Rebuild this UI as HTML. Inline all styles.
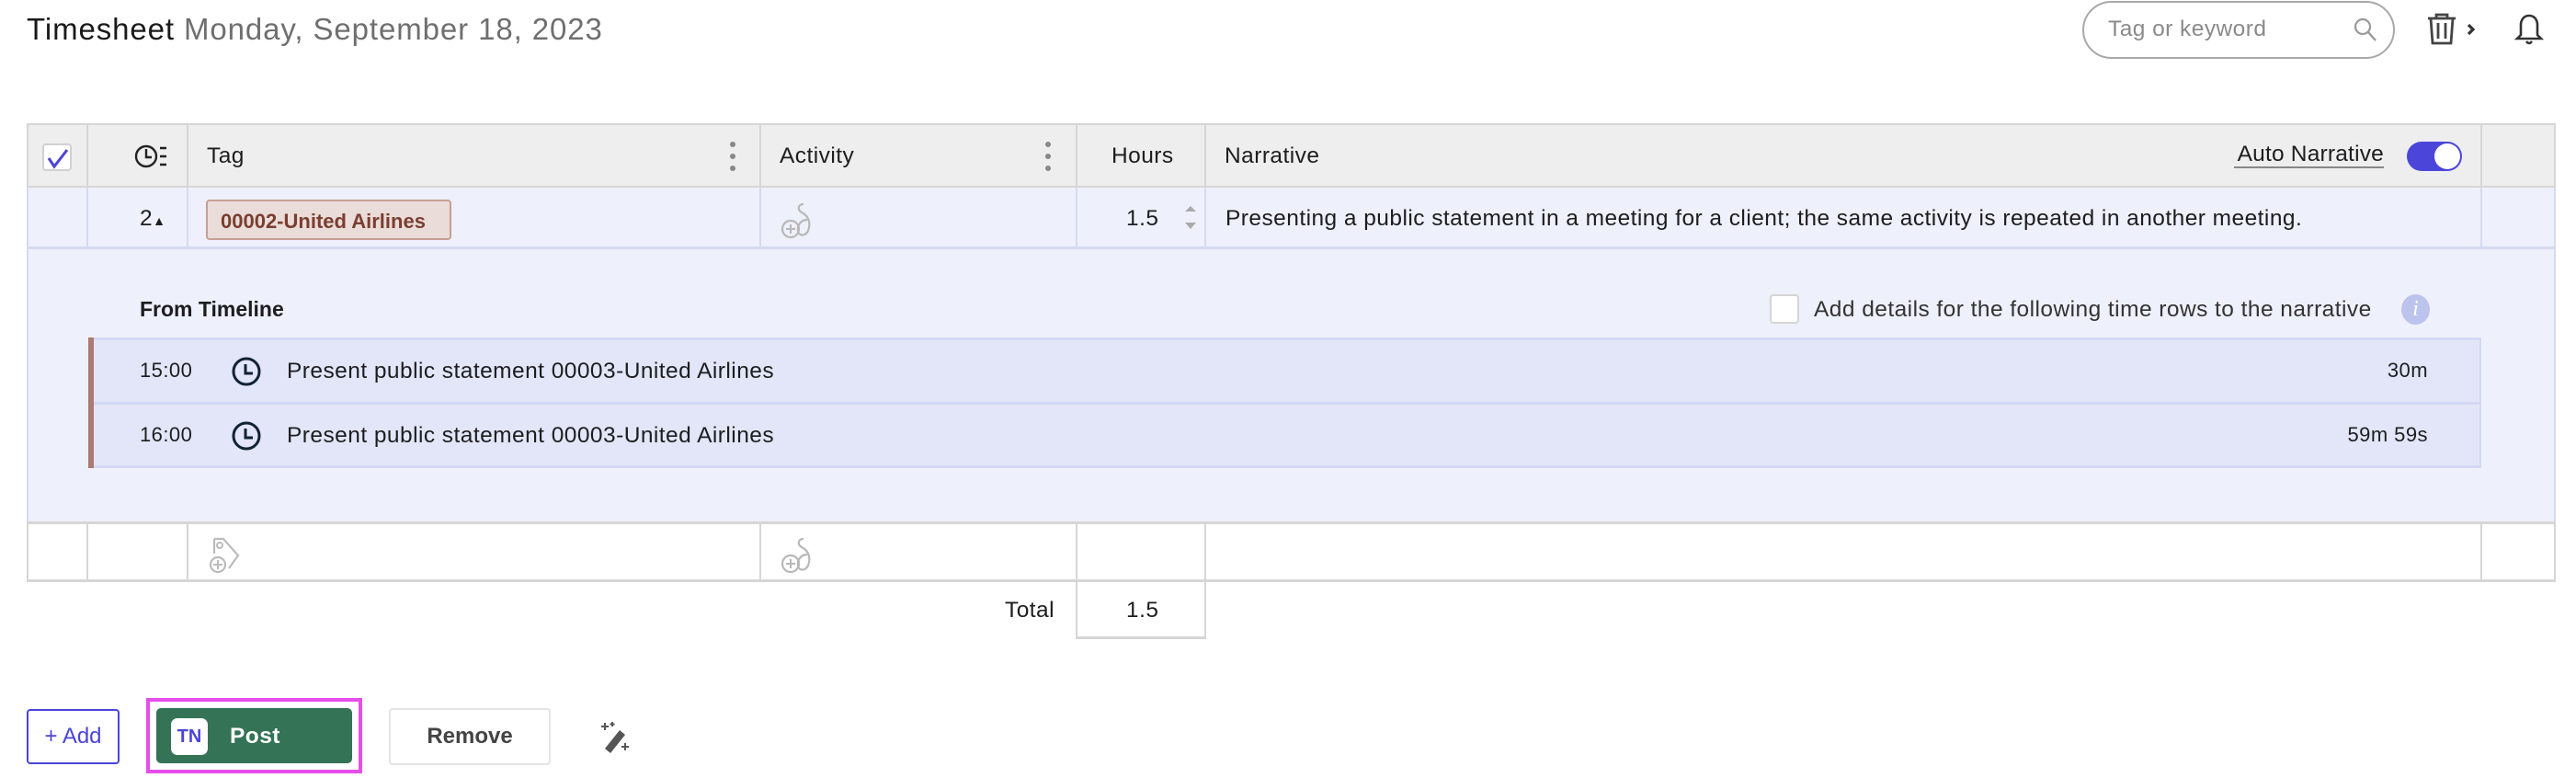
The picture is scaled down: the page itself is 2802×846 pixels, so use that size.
<!DOCTYPE html>
<html><head><meta charset="utf-8"><style>
*{box-sizing:border-box;margin:0;padding:0}
body{width:2802px;height:846px;background:#fff;font-family:"Liberation Sans",sans-serif;color:#1d1d1f;position:relative;overflow:hidden}
.a{position:absolute}
.t{font-size:24.5px;letter-spacing:0.45px;white-space:nowrap}
.vl{position:absolute;width:2px}
</style></head><body>
<div class="a" style="left:29px;top:13px;font-size:33px;white-space:nowrap;letter-spacing:0.9px"><span style="color:#1a1a1a">Timesheet</span> <span style="color:#6f6f6f">Monday, September 18, 2023</span></div>

<div class="a" style="left:2265px;top:1px;width:340px;height:63px;border:2px solid #a8a8a8;border-radius:32px"></div>
<div class="a t" style="left:2293px;top:18px;color:#8a8a8a">Tag or keyword</div>
<svg class="a" style="left:2558px;top:17px" width="32" height="32" viewBox="0 0 32 32"><circle cx="12" cy="12" r="8" fill="none" stroke="#999" stroke-width="2.2"/><path d="M18 18l8 9" stroke="#999" stroke-width="2.4"/></svg>
<svg class="a" style="left:2638px;top:14px" width="60" height="36" viewBox="0 0 60 36"><path d="M3 6h30M12 6V2h12v4M6 6l2 27h20l2-27M14 11v17M22 11v17" fill="none" stroke="#444" stroke-width="2.8"/><path d="M47 13l5 5-5 5" fill="none" stroke="#333" stroke-width="3.2"/></svg>
<svg class="a" style="left:2734px;top:15px" width="34" height="34" viewBox="0 0 34 34"><path d="M17 2c-6 0-9 5-9 10v11l-4 4h26l-4-4V12c0-5-3-10-9-10zM14 30q3 4 6 0" fill="none" stroke="#333" stroke-width="2.6"/></svg>

<!-- header -->
<div class="a" style="left:29px;top:134px;width:2751px;height:71px;background:#eeeeee;border:2px solid #d6d6d6;border-bottom:3px solid #d6d6d6"></div>
<div class="vl" style="left:94px;top:134px;height:70px;background:#d6d6d6"></div>
<div class="vl" style="left:203px;top:134px;height:70px;background:#d6d6d6"></div>
<div class="vl" style="left:826px;top:134px;height:70px;background:#d6d6d6"></div>
<div class="vl" style="left:1170px;top:134px;height:70px;background:#d6d6d6"></div>
<div class="vl" style="left:1310px;top:134px;height:70px;background:#d6d6d6"></div>
<div class="vl" style="left:2698px;top:134px;height:70px;background:#d6d6d6"></div>
<div class="a" style="left:46px;top:156px;width:32px;height:30px;border:2px solid #d0d0d0;border-radius:4px;background:#fff"></div>
<svg class="a" style="left:49px;top:159px" width="28" height="26" viewBox="0 0 28 26"><path d="M4 13l6 9L24 4" fill="none" stroke="#4a44d8" stroke-width="3"/></svg>
<svg class="a" style="left:145px;top:151px" width="40" height="40" viewBox="0 0 40 40"><circle cx="14" cy="19" r="11" fill="none" stroke="#222" stroke-width="2.4"/><path d="M14 11v9h6M29 10h7M29 19h7M29 28h7" fill="none" stroke="#222" stroke-width="2.4"/></svg>
<div class="a t" style="left:225px;top:156px">Tag</div>
<svg class="a" style="left:790px;top:152px" width="14" height="38"><circle cx="7" cy="5" r="3" fill="#888"/><circle cx="7" cy="18" r="3" fill="#888"/><circle cx="7" cy="31" r="3" fill="#888"/></svg>
<div class="a t" style="left:848px;top:156px">Activity</div>
<svg class="a" style="left:1133px;top:152px" width="14" height="38"><circle cx="7" cy="5" r="3" fill="#888"/><circle cx="7" cy="18" r="3" fill="#888"/><circle cx="7" cy="31" r="3" fill="#888"/></svg>
<div class="a t" style="left:1209px;top:156px">Hours</div>
<div class="a t" style="left:1332px;top:156px">Narrative</div>
<div class="a t" style="left:2430px;top:155px;width:163px;border-bottom:2px solid #888;line-height:26px;text-align:right;letter-spacing:0.2px">Auto Narrative</div>
<div class="a" style="left:2618px;top:154px;width:60px;height:32px;background:#4b46d9;border-radius:16px"></div>
<div class="a" style="left:2648px;top:156px;width:28px;height:28px;background:#fff;border-radius:50%"></div>

<!-- row1 + panel -->
<div class="a" style="left:29px;top:204px;width:2751px;height:364px;background:#eef0fb;border-left:2px solid #d5daf0;border-right:2px solid #d5daf0"></div>
<div class="a" style="left:29px;top:268px;width:2751px;height:3px;background:#d5daf0"></div>
<div class="vl" style="left:94px;top:204px;height:65px;background:#d5daf0"></div>
<div class="vl" style="left:203px;top:204px;height:65px;background:#d5daf0"></div>
<div class="vl" style="left:826px;top:204px;height:65px;background:#d5daf0"></div>
<div class="vl" style="left:1170px;top:204px;height:65px;background:#d5daf0"></div>
<div class="vl" style="left:1310px;top:204px;height:65px;background:#d5daf0"></div>
<div class="vl" style="left:2698px;top:204px;height:65px;background:#d5daf0"></div>
<div class="a t" style="left:152px;top:224px">2<span style="font-size:14px">▲</span></div>
<div class="a" style="left:224px;top:217px;width:267px;height:44px;background:#eadcd8;border:2px solid #c79f95;border-radius:4px;color:#7a3e30;font-size:22px;font-weight:bold;padding:9px 0 0 14px;white-space:nowrap">00002-United Airlines</div>
<svg class="a" style="left:848px;top:218px" width="42" height="44" viewBox="0 0 42 44"><circle cx="12" cy="31" r="9" fill="none" stroke="#b8b8b8" stroke-width="2.2"/><path d="M12 26v10M7 31h10" stroke="#b8b8b8" stroke-width="2"/><path d="M26 4c-6 0-7 6-2 9c8 4 10 12 7 20c-3 6-10 6-11 0c-1-7 4-12 10-12" fill="none" stroke="#b8b8b8" stroke-width="2.2"/></svg>
<div class="a t" style="left:1225px;top:224px">1.5</div>
<svg class="a" style="left:1288px;top:222px" width="14" height="30"><path d="M1 8l6-6 6 6zM1 20l6 7 6-7z" fill="#aaa"/></svg>
<div class="a t" style="left:1333px;top:224px">Presenting a public statement in a meeting for a client; the same activity is repeated in another meeting.</div>

<div class="a t" style="left:152px;top:323px;font-weight:bold;font-size:23px;letter-spacing:0">From Timeline</div>
<div class="a" style="left:1925px;top:320px;width:32px;height:32px;background:#fff;border:2px solid #d5d5d5;border-radius:4px"></div>
<div class="a t" style="left:1973px;top:323px;color:#333">Add details for the following time rows to the narrative</div>
<div class="a" style="left:2612px;top:320px;width:31px;height:33px;border-radius:50%;background:#bcc3ec;color:#fff;font-style:italic;font-family:'Liberation Serif',serif;font-size:24px;text-align:center;line-height:33px">i</div>

<div class="a" style="left:96px;top:367px;width:2603px;height:142px;background:#e2e6f8;border-top:3px solid #d3d9f3;border-bottom:3px solid #d3d9f3;border-right:2px solid #d3d9f3"></div>
<div class="a" style="left:96px;top:367px;width:6px;height:142px;background:#ab7a70"></div>
<div class="a" style="left:102px;top:437px;width:2596px;height:3px;background:#d3d9f3"></div>
<div class="a t" style="left:152px;top:390px;font-size:22px">15:00</div>
<div class="a t" style="left:152px;top:460px;font-size:22px">16:00</div>
<svg class="a" style="left:251px;top:387px" width="34" height="34" viewBox="0 0 34 34"><circle cx="17" cy="17" r="14" fill="none" stroke="#112233" stroke-width="3"/><path d="M16 9v10h8" fill="none" stroke="#112233" stroke-width="3"/></svg>
<svg class="a" style="left:251px;top:457px" width="34" height="34" viewBox="0 0 34 34"><circle cx="17" cy="17" r="14" fill="none" stroke="#112233" stroke-width="3"/><path d="M16 9v10h8" fill="none" stroke="#112233" stroke-width="3"/></svg>
<div class="a t" style="left:312px;top:390px">Present public statement 00003-United Airlines</div>
<div class="a t" style="left:312px;top:460px">Present public statement 00003-United Airlines</div>
<div class="a t" style="left:2541px;top:390px;width:100px;text-align:right;font-size:22px">30m</div>
<div class="a t" style="left:2491px;top:460px;width:150px;text-align:right;font-size:22px">59m 59s</div>

<!-- empty row -->
<div class="a" style="left:29px;top:567px;width:2751px;height:66px;border:2px solid #d6d6d6;border-top:3px solid #d6d6d6;border-bottom:3px solid #d6d6d6"></div>
<div class="vl" style="left:94px;top:567px;height:64px;background:#d6d6d6"></div>
<div class="vl" style="left:203px;top:567px;height:64px;background:#d6d6d6"></div>
<div class="vl" style="left:826px;top:567px;height:64px;background:#d6d6d6"></div>
<div class="vl" style="left:1170px;top:567px;height:128px;background:#d6d6d6"></div>
<div class="vl" style="left:1310px;top:567px;height:128px;background:#d6d6d6"></div>
<div class="vl" style="left:2698px;top:567px;height:64px;background:#d6d6d6"></div>
<svg class="a" style="left:225px;top:582px" width="42" height="44" viewBox="0 0 42 44"><path d="M8 4h10l16 18-10 14" fill="none" stroke="#bbb" stroke-width="2.2"/><path d="M8 4v16" stroke="#bbb" stroke-width="2.2"/><circle cx="14" cy="11" r="3" fill="none" stroke="#bbb" stroke-width="2"/><circle cx="12" cy="32" r="8" fill="none" stroke="#bbb" stroke-width="2.2"/><path d="M12 27v10M7 32h10" stroke="#bbb" stroke-width="2"/></svg>
<svg class="a" style="left:848px;top:582px" width="42" height="44" viewBox="0 0 42 44"><circle cx="12" cy="31" r="9" fill="none" stroke="#b8b8b8" stroke-width="2.2"/><path d="M12 26v10M7 31h10" stroke="#b8b8b8" stroke-width="2"/><path d="M26 4c-6 0-7 6-2 9c8 4 10 12 7 20c-3 6-10 6-11 0c-1-7 4-12 10-12" fill="none" stroke="#b8b8b8" stroke-width="2.2"/></svg>
<div class="a" style="left:1170px;top:692px;width:142px;height:3px;background:#d6d6d6"></div>
<div class="a t" style="left:1093px;top:650px">Total</div>
<div class="a t" style="left:1225px;top:650px">1.5</div>

<!-- buttons -->
<div class="a" style="left:29px;top:771px;width:101px;height:60px;border:2px solid #4a44d8;border-radius:4px;color:#4a44d8;font-size:24px;text-align:center;line-height:56px">+ Add</div>
<div class="a" style="left:159px;top:759px;width:235px;height:82px;border:4px solid #e54ee9"></div>
<div class="a" style="left:170px;top:770px;width:213px;height:60px;background:#347355;border-radius:5px"></div>
<div class="a" style="left:186px;top:781px;width:40px;height:40px;background:#fff;border-radius:7px;color:#4a44d8;font-size:20px;font-weight:bold;text-align:center;line-height:40px">TN</div>
<div class="a t" style="left:250px;top:787px;color:#fff;font-weight:bold">Post</div>
<div class="a" style="left:423px;top:770px;width:176px;height:62px;border:2px solid #e4e4e4;border-radius:4px;color:#444;font-size:24px;font-weight:bold;text-align:center;line-height:58px">Remove</div>
<svg class="a" style="left:652px;top:784px" width="34" height="36" viewBox="0 0 34 36"><path d="M22 10l6 5-16 20-6-5z" fill="#555"/><path d="M6 2v8M2 6h8M14 1v5M11.5 3.5h5M28 24v8M24 28h8" stroke="#555" stroke-width="2"/></svg>
</body></html>
